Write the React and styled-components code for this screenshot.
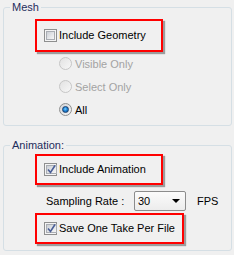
import React from 'react';
import styled, { createGlobalStyle } from 'styled-components';

const GlobalStyle = createGlobalStyle`
    html, body {
        margin: 0;
        padding: 0;
        background: #f0f0f0;
    }
    body {
        font-family: "Liberation Sans", Arial, sans-serif;
        font-size: 11px;
        color: #000;
    }
`;

const Page = styled.div`
    width: 234px;
    height: 255px;
    padding-top: 7px;
    box-sizing: border-box;
    display: flex;
    flex-flow: column;
    gap: 19px;
`;

const Group = styled.div`
    position: relative;
    margin-left: 3px;
    width: 229px;
    height: ${props => props.height}px;
    box-sizing: border-box;
    border: 1px solid #d5dfe5;
    border-radius: 3px;
    padding: ${props => props.padTop}px 0 0 0;
    display: flex;
    flex-flow: column;
`;

const Legend = styled.span`
    position: absolute;
    top: -7px;
    left: 6px;
    padding: 0 2px;
    line-height: 13px;
    background: #f0f0f0;
    color: #1e2d5c;
`;

const Highlight = styled.div`
    margin-left: 31px;
    width: ${props => props.width}px;
    height: ${props => props.height}px;
    box-sizing: border-box;
    border: 2px solid #ff0000;
    box-shadow: 2px 2px 1px rgba(0, 0, 0, 0.35);
    display: flex;
    align-items: center;
    padding: 0 0 1px 7px;
`;

const CheckRow = styled.label`
    display: flex;
    align-items: center;
    gap: 2px;
    line-height: 13px;
`;

const Box = styled.span`
    width: 13px;
    height: 13px;
    box-sizing: border-box;
    border: 1px solid #8e8f8f;
    background: #f4f4f4;
    padding: 1px;
    display: flex;
    span {
        flex: 1;
        border: 1px solid #a9adb3;
        background: linear-gradient(135deg, #cbcfd5 0%, #e4e6e9 55%, #f6f6f6 100%);
        display: flex;
        align-items: center;
        justify-content: center;
    }
`;

const RadioList = styled.div`
    display: flex;
    flex-flow: column;
    padding-left: 55px;
`;

const RadioRow = styled.label`
    height: 23px;
    display: flex;
    align-items: center;
    gap: 3px;
    color: ${props => (props.disabled ? '#a3a3a3' : '#000')};
`;

const Dot = styled.span`
    width: 13px;
    height: 13px;
    box-sizing: border-box;
    border-radius: 50%;
    border: 1px solid ${props => (props.disabled ? '#c6c6c6' : '#8e8f8f')};
    background: ${props => (props.disabled
        ? 'linear-gradient(135deg, #e2e2e2, #f7f7f7)'
        : 'linear-gradient(135deg, #d2d4d8, #f6f6f6)')};
    display: flex;
    align-items: center;
    justify-content: center;
    &::after {
        content: "";
        display: ${props => (props.checked ? 'block' : 'none')};
        width: 7px;
        height: 7px;
        border-radius: 50%;
        box-sizing: border-box;
        border: 1px solid #1a3f6e;
        background: radial-gradient(circle at 45% 40%, #7fd0ff 0%, #1f86d8 45%, #0b4d93 100%);
    }
`;

const RateRow = styled.div`
    display: flex;
    align-items: center;
    padding: 6px 0 0 42px;
    margin-bottom: 2px;
`;

const RateLabel = styled.span`
    width: 88px;
`;

const Select = styled.div`
    width: 52px;
    height: 20px;
    box-sizing: border-box;
    border: 1px solid #8c8c8c;
    border-radius: 2px;
    background: linear-gradient(#fbfbfb, #ececec);
    display: flex;
    align-items: center;
    justify-content: space-between;
    padding: 0 5px 0 3px;
    &::after {
        content: "";
        border-left: 4px solid transparent;
        border-right: 4px solid transparent;
        border-top: 4px solid #000;
    }
`;

const Unit = styled.span`
    margin-left: 11px;
`;

function CheckBox({ checked, children }) {
    return (
        <CheckRow>
            <Box>
                <span>
                    {checked && (
                        <svg width="9" height="9" viewBox="0 0 9 9">
                            <path d="M1 4.5 L3.5 7.5 L8 0.5" fill="none" stroke="#4a5f97" strokeWidth="1.6" />
                        </svg>
                    )}
                </span>
            </Box>
            {children}
        </CheckRow>
    );
}

function Radio({ checked, disabled, children }) {
    return (
        <RadioRow disabled={disabled}>
            <Dot checked={checked} disabled={disabled} />
            {children}
        </RadioRow>
    );
}

export default function App() {
    return (
        <>
            <GlobalStyle />
            <Page>
                <Group height={119} padTop={11}>
                    <Legend>Mesh</Legend>
                    <Highlight width={128} height={33}>
                        <CheckBox>Include Geometry</CheckBox>
                    </Highlight>
                    <RadioList>
                        <Radio disabled>Visible Only</Radio>
                        <Radio disabled>Select Only</Radio>
                        <Radio checked>All</Radio>
                    </RadioList>
                </Group>
                <Group height={106} padTop={8}>
                    <Legend>Animation:</Legend>
                    <Highlight width={128} height={31}>
                        <CheckBox checked>Include Animation</CheckBox>
                    </Highlight>
                    <RateRow>
                        <RateLabel>Sampling Rate :</RateLabel>
                        <Select>30</Select>
                        <Unit>FPS</Unit>
                    </RateRow>
                    <Highlight width={149} height={31}>
                        <CheckBox checked>Save One Take Per File</CheckBox>
                    </Highlight>
                </Group>
            </Page>
        </>
    );
}
